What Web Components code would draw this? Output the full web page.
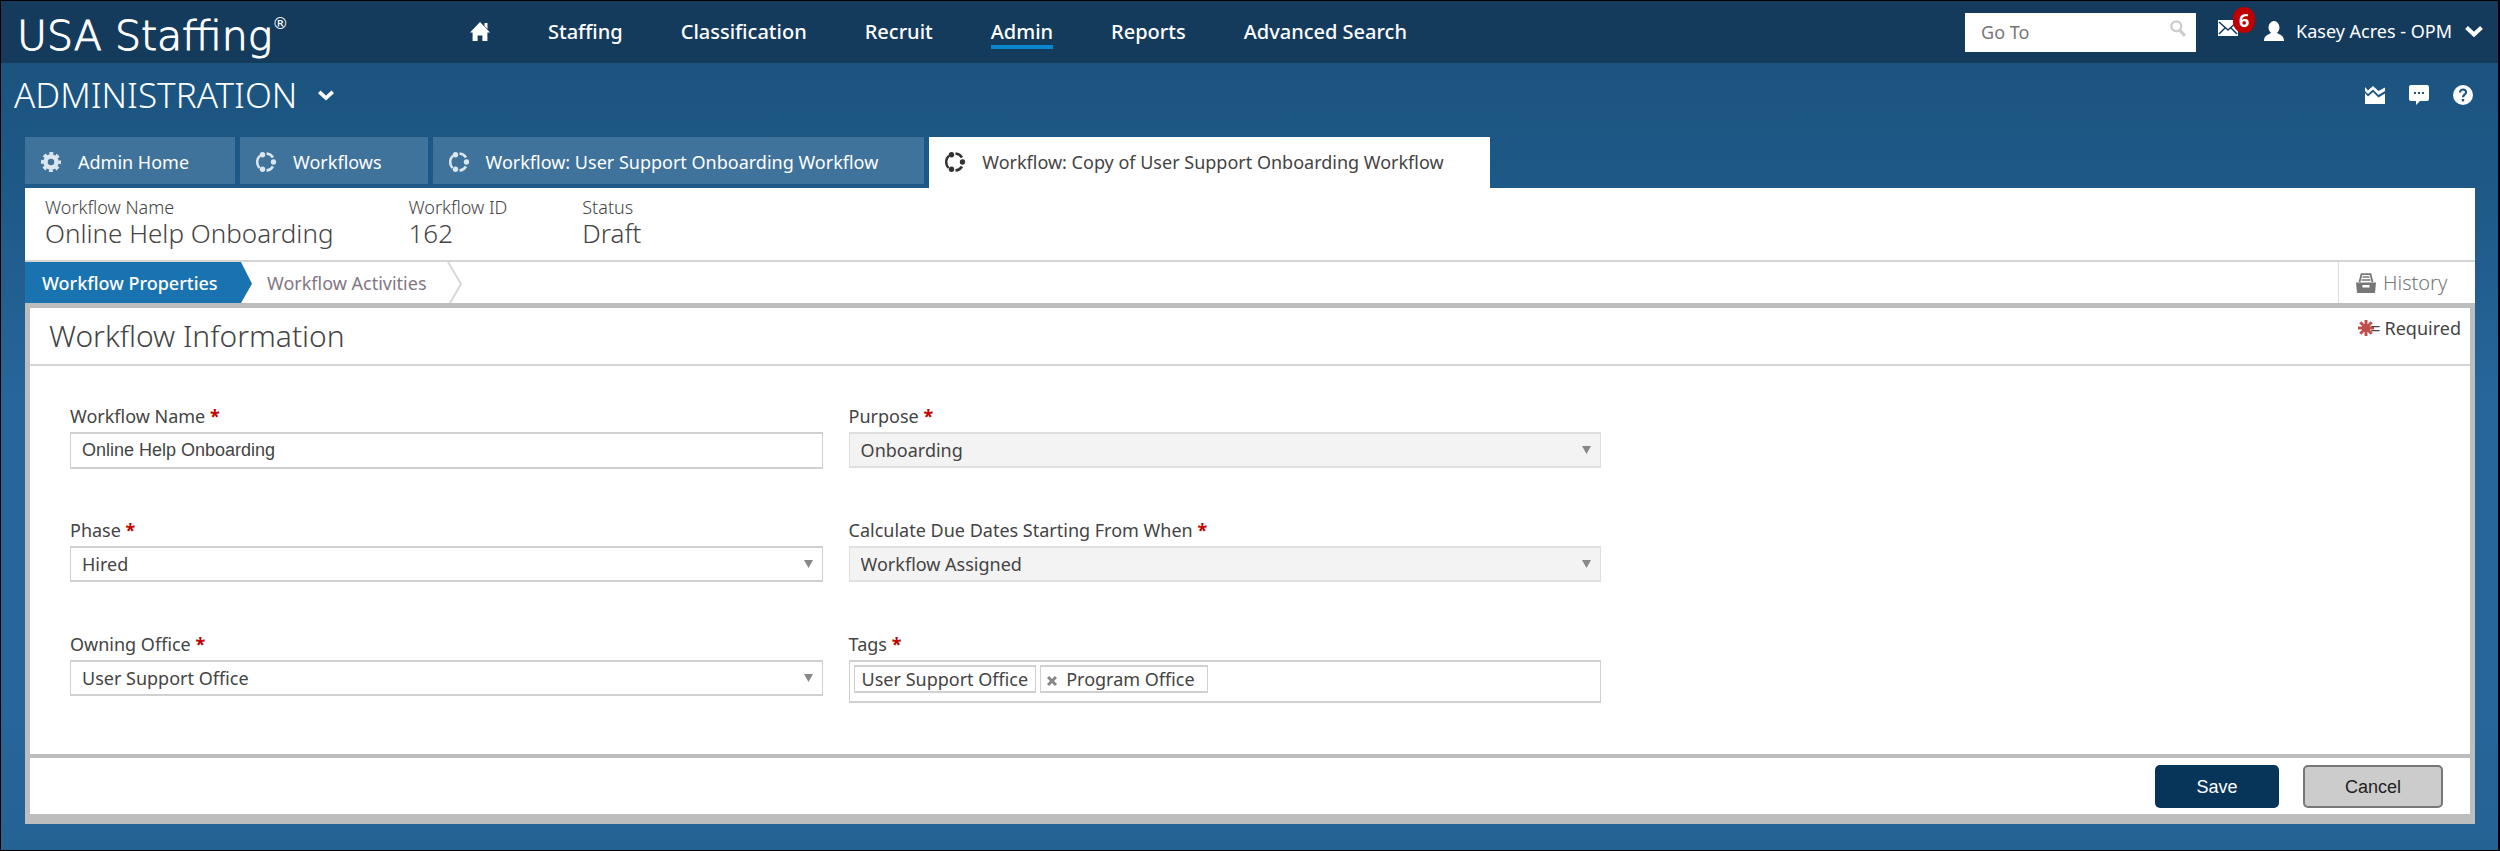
<!DOCTYPE html>
<html lang="en">
<head>
<meta charset="utf-8">
<meta name="viewport" content="width=device-width, initial-scale=1">
<title>USA Staffing - Administration</title>
<style>
  body { margin: 0; font-family: "Noto Sans", "Open Sans", sans-serif; font-size: 18px; line-height: 24px; color: #444; }
</style>
</head>
<body>
<staffing-app>
  <app-header slot="header"></app-header>
  <page-bar slot="bar" heading="ADMINISTRATION"></page-bar>
  <tab-strip slot="tabs">
    <page-tab icon="gear">Admin Home</page-tab>
    <page-tab icon="cycle">Workflows</page-tab>
    <page-tab icon="cycle">Workflow: User Support Onboarding Workflow</page-tab>
    <page-tab icon="cycle" active>Workflow: Copy of User Support Onboarding Workflow</page-tab>
  </tab-strip>
  <record-summary>
    <record-item label="Workflow Name">Online Help Onboarding</record-item>
    <record-item label="Workflow ID">162</record-item>
    <record-item label="Status">Draft</record-item>
  </record-summary>
  <step-bar></step-bar>
  <form-section heading="Workflow Information">
    <text-field label="Workflow Name" value="Online Help Onboarding"></text-field>
    <select-field label="Purpose" value="Onboarding" disabled></select-field>
    <select-field label="Phase" value="Hired"></select-field>
    <select-field label="Calculate Due Dates Starting From When" value="Workflow Assigned" disabled></select-field>
    <select-field label="Owning Office" value="User Support Office"></select-field>
    <tags-field label="Tags">
      <tag-chip>User Support Office</tag-chip>
      <tag-chip removable>Program Office</tag-chip>
    </tags-field>
  </form-section>
  <action-bar>
    <action-button kind="primary">Save</action-button>
    <action-button>Cancel</action-button>
  </action-bar>
</staffing-app>

<script>
const shapes = {
  home: '<path d="M10 0 20 10.5h-2.6V19h-5v-5.500h-4.800V19h-5v-8.500H0L10 0ZM14.500 1h3v6l-3-3Z" fill="currentColor"/>',
  search: '<circle cx="7" cy="7" r="5.500" fill="none" stroke="currentColor" stroke-width="2.500"/><path d="m11 11.500 5.500 6" stroke="currentColor" stroke-width="3.500"/>',
  mail: '<path d="M0 2h20v16H0z" fill="currentColor"/><path d="m1 4 9 8 9-8M1 16l6-6m12 6-6-6" fill="none" stroke="#143b5c" stroke-width="1.500"/>',
  user: '<ellipse cx="10" cy="6.500" rx="5.500" ry="6.500" fill="currentColor"/><path d="M0 20c0-5 3-6 7-8h6c4 2 7 3 7 8Z" fill="currentColor"/>',
  chevron: '<path d="m2.500 6.500 7.500 7 7.500-7" fill="none" stroke="currentColor" stroke-width="4"/>',
  chart: '<path d="M0 2 3 5.500 8 1l5.500 5L20 2.500V6l-6.500 4L8 4.500 3 9 0 6ZM0 8l3 3.500L8 7l5.500 5.500L20 8.500V19H0Z" fill="currentColor"/>',
  chat: '<path d="M2 0h16q2 0 2 2v12q0 2-2 2h-7l-4 4v-4H2q-2 0-2-2V2q0-2 2-2Z" fill="currentColor"/><path d="M5 7h2v2H5zm4 0h2v2H9zm4 0h2v2h-2z" fill="#1c5480"/>',
  help: '<circle cx="10" cy="10" r="10" fill="currentColor"/><path d="M7 7.600C7 3.400 13.300 3.600 13 7.500c-.2 2.200-3 2.200-3 4.700" fill="none" stroke="#1c5480" stroke-width="2.200"/><path d="M8.800 14h2.400v2.400H8.800z" fill="#1c5480"/>',
  gear: '<circle cx="10" cy="10" r="5.500" fill="none" stroke="currentColor" stroke-width="4.500"/><circle cx="10" cy="10" r="8.600" fill="none" stroke="currentColor" stroke-width="2.800" stroke-dasharray="3.800 2.955" stroke-dashoffset="1.900"/>',
  cycle: '<path d="M4 3.600A8.800 8.800 0 0 0 3.500 16M10.500 1.500a8.500 8.500 0 0 1 6.500 4M10.500 18.500a8.500 8.500 0 0 0 6.500-4" fill="none" stroke="currentColor" stroke-width="2.500"/><circle cx="6.500" cy="2.800" r="2.700" fill="currentColor"/><circle cx="6.500" cy="17.200" r="2.700" fill="currentColor"/><circle cx="17.500" cy="10" r="2.700" fill="currentColor"/>',
  archive: '<path d="M3.500 9 5.500 1.200h9L16.500 9" fill="none" stroke="currentColor" stroke-width="1.800"/><path d="M6.500 4h7M5.500 7h9" stroke="currentColor" stroke-width="1.600"/><path fill-rule="evenodd" d="M0 9.500h20L19 20H1ZM6.500 12v2.500h7V12Z" fill="currentColor"/>',
  star: '<path d="M8 0v16M0 8h16M2.300 2.300l11.400 11.400M13.700 2.300 2.300 13.700" stroke="currentColor" stroke-width="3"/><circle cx="8" cy="8" r="4" fill="currentColor"/>'
};
const icon = (name, size = 20, box = 20) =>
  `<svg width="${size}" height="${size}" viewBox="0 0 ${box} ${box}" aria-hidden="true">${shapes[name]}</svg>`;

const base = '*{box-sizing:border-box}svg{display:block;flex:none}a{color:inherit;text-decoration:none}button{font:inherit;color:inherit;background:none;border:0;padding:0;cursor:pointer}';

/* Registers an element whose shadow root is built from its own attributes. */
const define = (tag, css, markup) => customElements.define(tag, class extends HTMLElement {
  connectedCallback() {
    if (this.shadowRoot) return;
    this.attachShadow({ mode: 'open' }).innerHTML = `<style>${base}${css}</style>${markup(this)}`;
  }
});

define('staffing-app', `
  :host { display: block; min-height: 100vh; box-sizing: border-box; border: 1px solid #000; border-right-width: 2px;
    background: linear-gradient(#1b517c 0, #1e5987 190px, #27669b 400px, #27669b 700px, #256294 100%); padding-bottom: 25px; }
  main { margin: 0 23px 0 24px; padding-bottom: 10px; background: #bdbdbd; }
  .tabs { margin-left: 24px; }`,
  () => `<slot name="header"></slot><slot name="bar"></slot><div class="tabs"><slot name="tabs"></slot></div><main><slot></slot></main>`);

define('app-header', `
  :host { display: flex; align-items: center; height: 62px; background: #143b5c; color: #fff; padding: 0 14px 0 16px; box-sizing: border-box; }
  .logo { flex: 0 0 453px; font-family: "DejaVu Sans", sans-serif; font-weight: 200; font-size: 41px; line-height: 48px; white-space: nowrap; display: flex; -webkit-text-stroke: 1px #fff; padding-top: 8px; }
  .logo sup { font-size: 16px; line-height: 16px; -webkit-text-stroke: 0; font-weight: 400; padding-top: 4px; vertical-align: baseline; }
  nav { display: flex; align-items: center; gap: 58px; font-size: 20px; font-weight: 500; flex: 1; }
  nav a { white-space: nowrap; line-height: 26px; padding: 4px 0 0; border-bottom: 4px solid transparent; }
  nav a[aria-current] { border-color: #0a86cc; }
  .goto { display: flex; align-items: center; width: 231px; height: 39px; background: #fff; padding: 0 8px 0 16px; }
  .goto input { flex: 1; min-width: 0; border: 0; outline: 0; background: none; padding: 0; font: inherit; color: #666; }
  .goto input::placeholder { color: #777; opacity: 1; }
  .goto button { color: #ccc; padding-bottom: 6px; }
  .mail { position: relative; margin-left: 22px; padding-bottom: 8px; }
  .badge { position: absolute; left: 15px; top: -11px; width: 22px; height: 26px; border-radius: 11px; background: #c00000; font-weight: 700; line-height: 26px; text-align: center; }
  .user { display: flex; align-items: center; gap: 12px; margin-left: 26px; white-space: nowrap; padding-bottom: 2px; }`,
  () => `<a class="logo" href="#">USA Staffing<sup>®</sup></a>
  <nav><a href="#" aria-label="Home">${icon('home')}</a><a href="#">Staffing</a><a href="#">Classification</a><a href="#">Recruit</a><a href="#" aria-current="page">Admin</a><a href="#">Reports</a><a href="#">Advanced Search</a></nav>
  <div class="goto"><input type="text" placeholder="Go To" aria-label="Go To"><button aria-label="Search">${icon('search', 18)}</button></div>
  <a class="mail" href="#" aria-label="Messages">${icon('mail')}<span class="badge">6</span></a>
  <button class="user">${icon('user')}<span>Kasey Acres - OPM</span>${icon('chevron')}</button>`);

define('page-bar', `
  :host { display: flex; align-items: center; justify-content: space-between; height: 74px; color: #fff; padding: 0 25px 10px 13px; box-sizing: border-box; }
  h1 { margin: 0; font-weight: 300; font-size: 35px; line-height: 44px; }
  .title, .tools { display: flex; align-items: center; gap: 24px; }
  .title { gap: 20px; }`,
  el => `<button class="title"><h1>${el.getAttribute('heading')}</h1>${icon('chevron', 18)}</button>
  <div class="tools"><a href="#" aria-label="Dashboard">${icon('chart')}</a><a href="#" aria-label="Feedback">${icon('chat')}</a><a href="#" aria-label="Help">${icon('help')}</a></div>`);

define('tab-strip', `:host { display: flex; gap: 5px; align-items: flex-start; height: 51px; }`, () => '<slot></slot>');

define('page-tab', `
  :host { display: block; }
  a { display: flex; align-items: center; gap: 17px; height: 47px; padding: 2px 46px 0 16px; background: #40739b; color: #fff; white-space: nowrap; }
  svg { color: #dbe6ee; }
  :host([active]) a { height: 51px; padding-bottom: 4px; background: #fff; color: #444; }
  :host([active]) svg { color: #333; }`,
  el => `<a href="#">${icon(el.getAttribute('icon'))}<span><slot></slot></span></a>`);

define('record-summary', `:host { display: flex; gap: 75px; height: 74px; padding: 7px 20px 0; background: #fff; border-bottom: 2px solid #d4d4d4; box-sizing: border-box; }`, () => '<slot></slot>');

define('record-item', `
  :host { display: block; font-weight: 300; }
  dl, dd { margin: 0; }
  dd { font-size: 26px; line-height: 28px; white-space: nowrap; }`,
  el => `<dl><dt>${el.getAttribute('label')}</dt><dd><slot></slot></dd></dl>`);

define('step-bar', `
  :host { display: flex; height: 41px; background: #fff; }
  nav { display: flex; flex: 1; }
  a { display: flex; align-items: center; white-space: nowrap; }
  .on { width: 227px; padding-left: 17px; background: #1a73b1; color: #fff; font-weight: 500; clip-path: polygon(0 0, 216px 0, 100% 53%, 216px 100%, 0 100%); }
  .next { padding-left: 15px; color: #837684; gap: 20px; }
  .history { gap: 7px; width: 137px; padding-left: 17px; border-left: 1px solid #ddd; color: #777; font-weight: 300; font-size: 20px; }`,
  () => `<nav><a class="on" href="#" aria-current="step">Workflow Properties</a>
  <a class="next" href="#">Workflow Activities<svg width="16" height="41" viewBox="0 0 16 41" aria-hidden="true"><path d="m1 0 13 22L3 41" fill="none" stroke="#d8d8d8" stroke-width="2"/></svg></a></nav>
  <a class="history" href="#">${icon('archive')}History</a>`);

define('form-section', `
  :host { display: block; margin: 5px 5px 0; background: #fff; }
  header { display: flex; justify-content: space-between; align-items: flex-start; height: 58px; padding: 8px 9px 0 19px; border-bottom: 2px solid #d4d4d4; }
  h2 { margin: 0; font-weight: 300; font-size: 30px; line-height: 40px; }
  .required { display: flex; align-items: center; }
  .required svg { color: #c0504d; margin-right: -4px; }
  .required span { padding-left: 4px; }
  .grid { display: grid; grid-template-columns: 15fr 15fr 16fr; grid-auto-rows: 114px; column-gap: 26px; padding: 38px 40px 8px; }
  ::slotted(:nth-child(odd)) { grid-column: 1; }`,
  el => `<header><h2>${el.getAttribute('heading')}</h2><div class="required">${icon('star', 16, 16)}=<span>Required</span></div></header>
  <div class="grid"><slot></slot></div>`);

const fieldCss = `
  :host { display: block; }
  label { display: block; margin-bottom: 4px; }
  label b { color: #c00000; }
  input, select { font: inherit; color: #444; }`;
const fieldLabel = el => `<label for="control">${el.getAttribute('label')} <b>*</b></label>`;

define('text-field', `${fieldCss}
  input { display: block; width: 100%; height: 37px; padding: 0 11px; border: solid #d0d0d0; border-width: 2px 1px; font-family: "Liberation Sans", Arial, sans-serif; }`,
  el => `${fieldLabel(el)}<input id="control" type="text" value="${el.getAttribute('value')}" required>`);

define('select-field', `${fieldCss}
  .box { display: grid; align-items: center; }
  select, svg { grid-area: 1 / 1; }
  select { appearance: none; width: 100%; height: 36px; padding: 0 11px; border: solid #d0d0d0; border-width: 2px 1px; border-radius: 0; background: #fff; }
  select:disabled { background: #f3f3f3; border-color: #dfdfdf; opacity: 1; }
  svg { justify-self: end; margin-right: 10px; pointer-events: none; }`,
  el => `${fieldLabel(el)}<div class="box"><select id="control" ${el.hasAttribute('disabled') ? 'disabled' : ''}><option>${el.getAttribute('value')}</option></select>
  <svg width="9" height="8" viewBox="0 0 9 8" aria-hidden="true"><path d="M0 0h9L4.500 8Z" fill="#888"/></svg></div>`);

define('tags-field', `${fieldCss}
  .box { display: flex; gap: 4px; align-items: flex-start; height: 43px; padding: 3px 4px; border: solid #d0d0d0; border-width: 2px 1px; }
  input { flex: 1; min-width: 0; border: 0; outline: 0; padding: 0; height: 28px; background: none; }`,
  el => `${fieldLabel(el)}<div class="box"><slot></slot><input id="control" type="text"></div>`);

define('tag-chip', `
  :host { display: flex; align-items: center; gap: 9px; height: 28px; padding: 0 7px; border: solid #d0d0d0; border-width: 2px 1px; box-sizing: border-box; white-space: nowrap; }
  :host([removable]) { padding: 0 12px 0 6px; }
  button { padding-top: 3px; }`,
  el => `${el.hasAttribute('removable') ? '<button aria-label="Remove"><svg width="10" height="10" viewBox="0 0 10 10"><path d="m1 1 8 8M9 1 1 9" stroke="#888" stroke-width="3"/></svg></button>' : ''}<span><slot></slot></span>`);

define('action-bar', `
  :host { display: flex; justify-content: flex-end; gap: 24px; margin: 4px 5px 0; padding: 7px 27px 6px; background: #fff; }`, () => '<slot></slot>');
define('action-button', `
  :host { display: block; }
  button { display: block; height: 43px; width: 140px; border: 2px solid #777; border-radius: 5px; background: #ccc; color: #222; font-family: "Liberation Sans", Arial, sans-serif; }
  :host([kind=primary]) button { width: 124px; border: 0; background: #073459; color: #fff; }`,
  () => `<button type="button"><slot></slot></button>`);
</script>
</body>
</html>
